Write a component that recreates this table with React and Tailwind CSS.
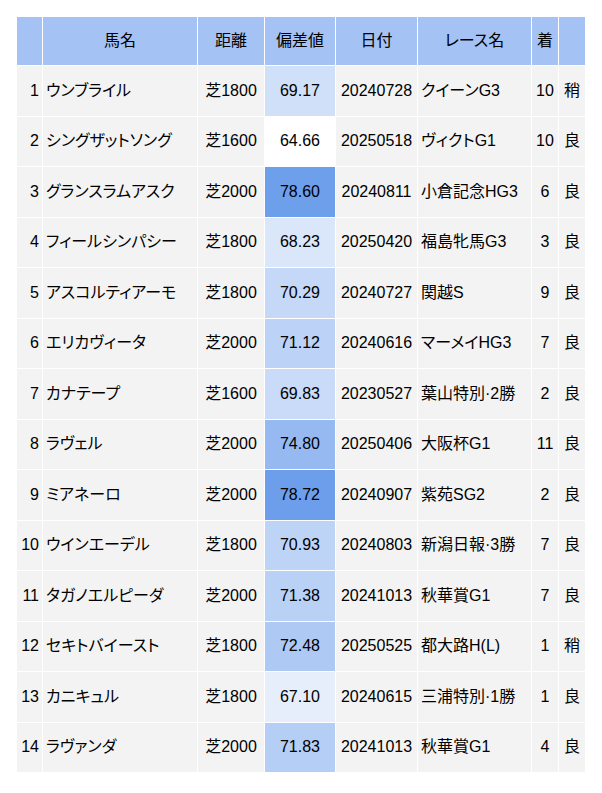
import React from 'react';

const rows = [
  [1, 'ウンブライル', '芝1800', 69.17, '20240728', 'クイーンG3', 10, '稍'],
  [2, 'シングザットソング', '芝1600', 64.66, '20250518', 'ヴィクトG1', 10, '良'],
  [3, 'グランスラムアスク', '芝2000', 78.6, '20240811', '小倉記念HG3', 6, '良'],
  [4, 'フィールシンパシー', '芝1800', 68.23, '20250420', '福島牝馬G3', 3, '良'],
  [5, 'アスコルティアーモ', '芝1800', 70.29, '20240727', '関越S', 9, '良'],
  [6, 'エリカヴィータ', '芝2000', 71.12, '20240616', 'マーメイHG3', 7, '良'],
  [7, 'カナテープ', '芝1600', 69.83, '20230527', '葉山特別·2勝', 2, '良'],
  [8, 'ラヴェル', '芝2000', 74.8, '20250406', '大阪杯G1', 11, '良'],
  [9, 'ミアネーロ', '芝2000', 78.72, '20240907', '紫苑SG2', 2, '良'],
  [10, 'ウインエーデル', '芝1800', 70.93, '20240803', '新潟日報·3勝', 7, '良'],
  [11, 'タガノエルピーダ', '芝2000', 71.38, '20241013', '秋華賞G1', 7, '良'],
  [12, 'セキトバイースト', '芝1800', 72.48, '20250525', '都大路H(L)', 1, '稍'],
  [13, 'カニキュル', '芝1800', 67.1, '20240615', '三浦特別·1勝', 1, '良'],
  [14, 'ラヴァンダ', '芝2000', 71.83, '20241013', '秋華賞G1', 4, '良'],
];

const min = 64.66;
const max = 78.72;

// white -> #6d9eeb colour scale
function scale(v) {
  const t = (v - min) / (max - min);
  const r = Math.round(255 + (109 - 255) * t);
  const g = Math.round(255 + (158 - 255) * t);
  const b = Math.round(255 + (235 - 255) * t);
  return `rgb(${r},${g},${b})`;
}

const cell = 'flex items-center bg-[#f3f3f3]';

export default function App() {
  return (
    <div className="min-h-[793px] bg-white pl-[17px] pt-[17px] font-['Liberation_Sans','Noto_Sans_CJK_JP',sans-serif] text-[16px] text-black [font-feature-settings:'palt']">
      <div className="grid w-[568px] grid-cols-[25px_154px_66px_70px_81px_113px_26px_26px] grid-rows-[48px] auto-rows-[49.5px] gap-px bg-white">
        <div className="bg-[#a4c2f4]" />
        <div className="flex items-center justify-center bg-[#a4c2f4]">馬名</div>
        <div className="flex items-center justify-center bg-[#a4c2f4]">距離</div>
        <div className="flex items-center justify-center bg-[#a4c2f4]">偏差値</div>
        <div className="flex items-center justify-center bg-[#a4c2f4]">日付</div>
        <div className="flex items-center justify-center bg-[#a4c2f4]">レース名</div>
        <div className="flex items-center justify-center bg-[#a4c2f4]">着</div>
        <div className="bg-[#a4c2f4]" />

        {rows.map((r) => (
          <React.Fragment key={r[0]}>
            <div className={`${cell} justify-end pr-[3px]`}>{r[0]}</div>
            <div className={`${cell} pl-[3px] whitespace-nowrap`}>{r[1]}</div>
            <div className={`${cell} justify-center`}>{r[2]}</div>
            <div className="flex items-center justify-center" style={{ backgroundColor: scale(r[3]) }}>
              {r[3].toFixed(2)}
            </div>
            <div className={`${cell} justify-center`}>{r[4]}</div>
            <div className={`${cell} pl-[3px] whitespace-nowrap`}>{r[5]}</div>
            <div className={`${cell} justify-center`}>{r[6]}</div>
            <div className={`${cell} justify-center`}>{r[7]}</div>
          </React.Fragment>
        ))}
      </div>
    </div>
  );
}
